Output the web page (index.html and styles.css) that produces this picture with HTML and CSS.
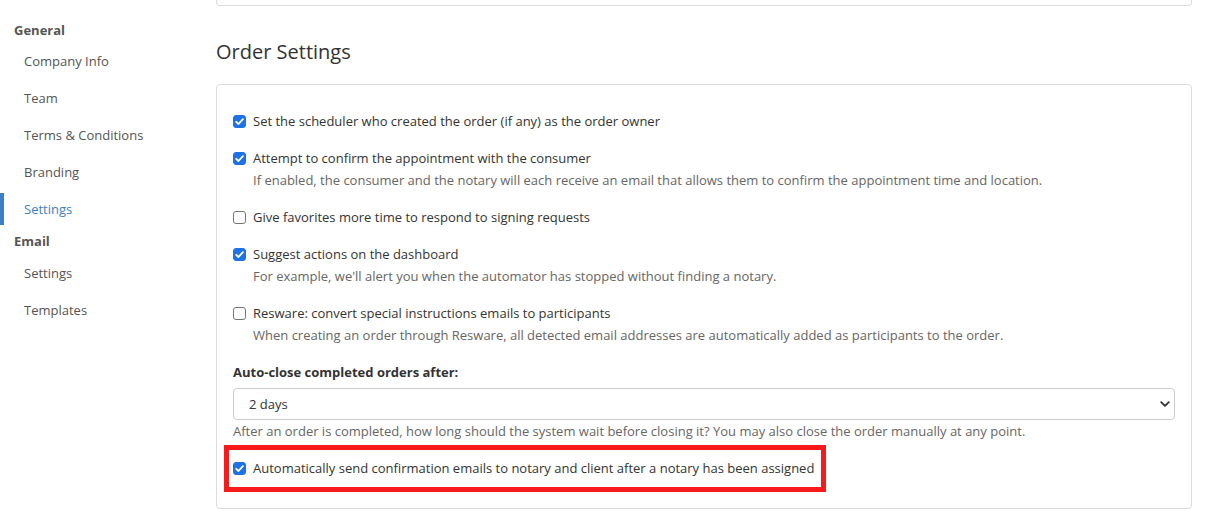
FILE: index.html
```html
<!DOCTYPE html>
<html>
<head>
<meta charset="utf-8">
<link rel="stylesheet" href="styles.css">
</head>
<body>
<div class="layout">
  <nav class="sidebar">
    <div class="nav-group">
      <div class="nav-heading">General</div>
      <a class="nav-item">Company Info</a>
      <a class="nav-item">Team</a>
      <a class="nav-item">Terms &amp; Conditions</a>
      <a class="nav-item">Branding</a>
      <a class="nav-item active">Settings</a>
    </div>
    <div class="nav-group">
      <div class="nav-heading">Email</div>
      <a class="nav-item">Settings</a>
      <a class="nav-item">Templates</a>
    </div>
  </nav>
  <main class="main">
    <div class="card-prev"></div>
    <h2 class="section-title">Order Settings</h2>
    <div class="card">
      <div class="option">
        <div class="check-row"><span class="cb checked"><svg viewBox="0 0 13 13" width="13" height="13"><path d="M3.2 6.8 L5.5 9 L9.9 4.2" fill="none" stroke="#fff" stroke-width="1.8" stroke-linecap="round" stroke-linejoin="round"/></svg></span><span class="label">Set the scheduler who created the order (if any) as the order owner</span></div>
      </div>
      <div class="option">
        <div class="check-row"><span class="cb checked"><svg viewBox="0 0 13 13" width="13" height="13"><path d="M3.2 6.8 L5.5 9 L9.9 4.2" fill="none" stroke="#fff" stroke-width="1.8" stroke-linecap="round" stroke-linejoin="round"/></svg></span><span class="label">Attempt to confirm the appointment with the consumer</span></div>
        <div class="desc">If enabled, the consumer and the notary will each receive an email that allows them to confirm the appointment time and location.</div>
      </div>
      <div class="option">
        <div class="check-row"><span class="cb"></span><span class="label">Give favorites more time to respond to signing requests</span></div>
      </div>
      <div class="option">
        <div class="check-row"><span class="cb checked"><svg viewBox="0 0 13 13" width="13" height="13"><path d="M3.2 6.8 L5.5 9 L9.9 4.2" fill="none" stroke="#fff" stroke-width="1.8" stroke-linecap="round" stroke-linejoin="round"/></svg></span><span class="label">Suggest actions on the dashboard</span></div>
        <div class="desc">For example, we'll alert you when the automator has stopped without finding a notary.</div>
      </div>
      <div class="option">
        <div class="check-row"><span class="cb"></span><span class="label">Resware: convert special instructions emails to participants</span></div>
        <div class="desc">When creating an order through Resware, all detected email addresses are automatically added as participants to the order.</div>
      </div>
      <div class="field">
        <div class="field-label">Auto-close completed orders after:</div>
        <div class="select">
          <span>2 days</span>
          <svg class="chevron" viewBox="0 0 10 6" width="10" height="6"><path d="M1.2 1.2 L5 4.8 L8.8 1.2" fill="none" stroke="#333" stroke-width="1.8" stroke-linecap="round" stroke-linejoin="round"/></svg>
        </div>
        <div class="help">After an order is completed, how long should the system wait before closing it? You may also close the order manually at any point.</div>
      </div>
      <div class="highlight">
        <div class="check-row"><span class="cb checked"><svg viewBox="0 0 13 13" width="13" height="13"><path d="M3.2 6.8 L5.5 9 L9.9 4.2" fill="none" stroke="#fff" stroke-width="1.8" stroke-linecap="round" stroke-linejoin="round"/></svg></span><span class="label">Automatically send confirmation emails to notary and client after a notary has been assigned</span></div>
      </div>
    </div>
  </main>
</div>
</body>
</html>
```

FILE: styles.css
```css
* { box-sizing: border-box; }
html, body { margin: 0; padding: 0; background: #fff; }
body {
  font-family: "Open Sans", "Noto Sans", "Liberation Sans", sans-serif;
  font-size: 13px;
  color: #333;
  width: 1216px;
  height: 522px;
  overflow: hidden;
}
.layout { display: flex; }

.sidebar { width: 216px; flex: none; padding-top: 19px; }
.nav-group + .nav-group { margin-top: 5px; }
.nav-heading {
  font-weight: 700;
  color: #555;
  line-height: 22px;
  padding-left: 14px;
  margin-bottom: 4px;
}
.nav-group + .nav-group .nav-heading { margin-bottom: 5px; }
.nav-item {
  display: flex;
  align-items: center;
  height: 32px;
  color: #555;
  margin-bottom: 5px;
  border-left: 4px solid transparent;
  padding-left: 20px;
}
.nav-item:last-child { margin-bottom: 0; }
.nav-item.active { color: #3b7fc6; border-left-color: #3b7fc6; }

.main { width: 976px; flex: none; }
.card-prev {
  height: 6px;
  border: 1px solid #dcdcdc;
  border-top: none;
  border-radius: 0 0 4px 4px;
}
.section-title {
  font-size: 20px;
  font-weight: 400;
  line-height: 28px;
  margin: 32px 0 18px;
  color: #333;
}
.card {
  border: 1px solid #dcdcdc;
  border-radius: 4px;
  padding: 25px 16px 16px 16px;
}
.option { margin-bottom: 15px; }
.check-row { display: flex; align-items: center; line-height: 22px; }
.cb {
  width: 13px;
  height: 13px;
  border-radius: 3px;
  border: 1px solid #767676;
  background: #fff;
  flex: none;
  margin-right: 7px;
  display: flex;
}
.cb.checked { background: #1f72e6; border-color: #1f72e6; }
.cb svg { margin: -1px; display: block; }
.label { color: #333; }
.desc { color: #666; line-height: 22px; padding-left: 20px; }

.field-label { font-weight: 700; line-height: 22px; color: #333; }
.select {
  position: relative;
  margin-top: 5px;
  height: 32px;
  border: 1px solid #ccc;
  border-radius: 4px;
  display: flex;
  align-items: center;
  padding-left: 15px;
  color: #333;
}
.chevron { position: absolute; right: 4px; top: 12px; }
.help { color: #666; line-height: 22px; }

.highlight {
  display: inline-flex;
  margin: 3px 0 0 -9px;
  border: 5px solid #f81a1a;
  padding: 7px 7px 8px 4px;
}
```
